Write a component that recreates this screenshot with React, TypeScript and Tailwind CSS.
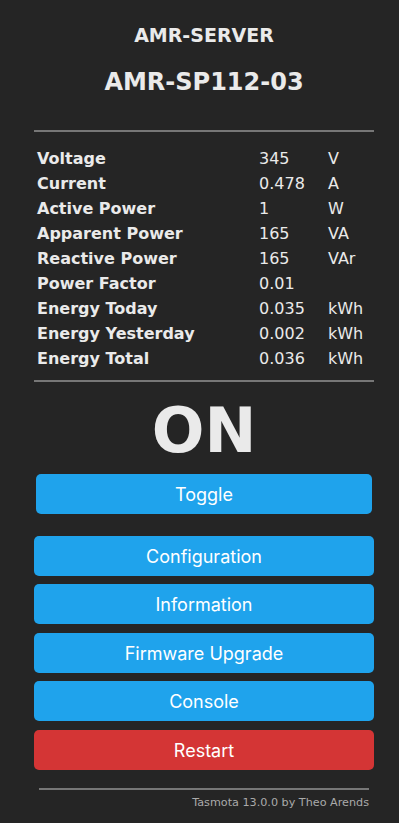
import React from "react";

const rows: [string, string, string][] = [
  ["Voltage", "345", "V"],
  ["Current", "0.478", "A"],
  ["Active Power", "1", "W"],
  ["Apparent Power", "165", "VA"],
  ["Reactive Power", "165", "VAr"],
  ["Power Factor", "0.01", ""],
  ["Energy Today", "0.035", "kWh"],
  ["Energy Yesterday", "0.002", "kWh"],
  ["Energy Total", "0.036", "kWh"],
];

const verdana = "font-['DejaVu_Sans',Verdana,sans-serif]";
const btnFont = "font-['Inter','Roboto',sans-serif]";

export default function App() {
  const btn =
    "h-[40px] rounded-[5px] bg-[#1fa3ec] text-white text-[18px] flex items-center justify-center " + btnFont;
  return (
    <div className={"w-[399px] min-h-[823px] bg-[#252525] text-[#eaeaea] " + verdana}>
      <div className="ml-[34px] w-[340px] flex flex-col">
        <div className="mt-[25px] h-[20px] leading-[20px] text-[19px] font-bold text-center">AMR-SERVER</div>
        <div className="mt-[23px] h-[28px] leading-[28px] text-[24px] font-bold text-center">AMR-SP112-03</div>
        <div className="mt-[34px] h-[2px] bg-[#777777]" />
        <div className="mt-[14px] flex flex-col pl-[3px]">
          {rows.map(([l, v, u]) => (
            <div key={l} className="flex h-[25px] leading-[25px] text-[16px]">
              <div className="w-[222px] font-bold">{l}</div>
              <div className="w-[69px]">{v}</div>
              <div>{u}</div>
            </div>
          ))}
        </div>
        <div className="mt-[9px] h-[2px] bg-[#777777]" />
        <div className="mt-[17px] h-[64px] leading-[64px] text-[62px] font-bold text-center">ON</div>
        <div className={"mt-[11px] mx-[2px] " + btn}>Toggle</div>
        <div className={"mt-[22px] " + btn}>Configuration</div>
        <div className={"mt-[8px] " + btn}>Information</div>
        <div className={"mt-[9px] " + btn}>Firmware Upgrade</div>
        <div className={"mt-[8px] " + btn}>Console</div>
        <div className={"mt-[9px] h-[40px] rounded-[5px] bg-[#d43535] text-white text-[18px] flex items-center justify-center " + btnFont}>
          Restart
        </div>
        <div className="mt-[18px] mx-[5px] h-[2px] bg-[#777777]" />
        <div className="mt-[6px] pr-[5px] text-right text-[11.2px] leading-[14px] text-[#aaaaaa]">
          Tasmota 13.0.0 by Theo Arends
        </div>
      </div>
    </div>
  );
}
